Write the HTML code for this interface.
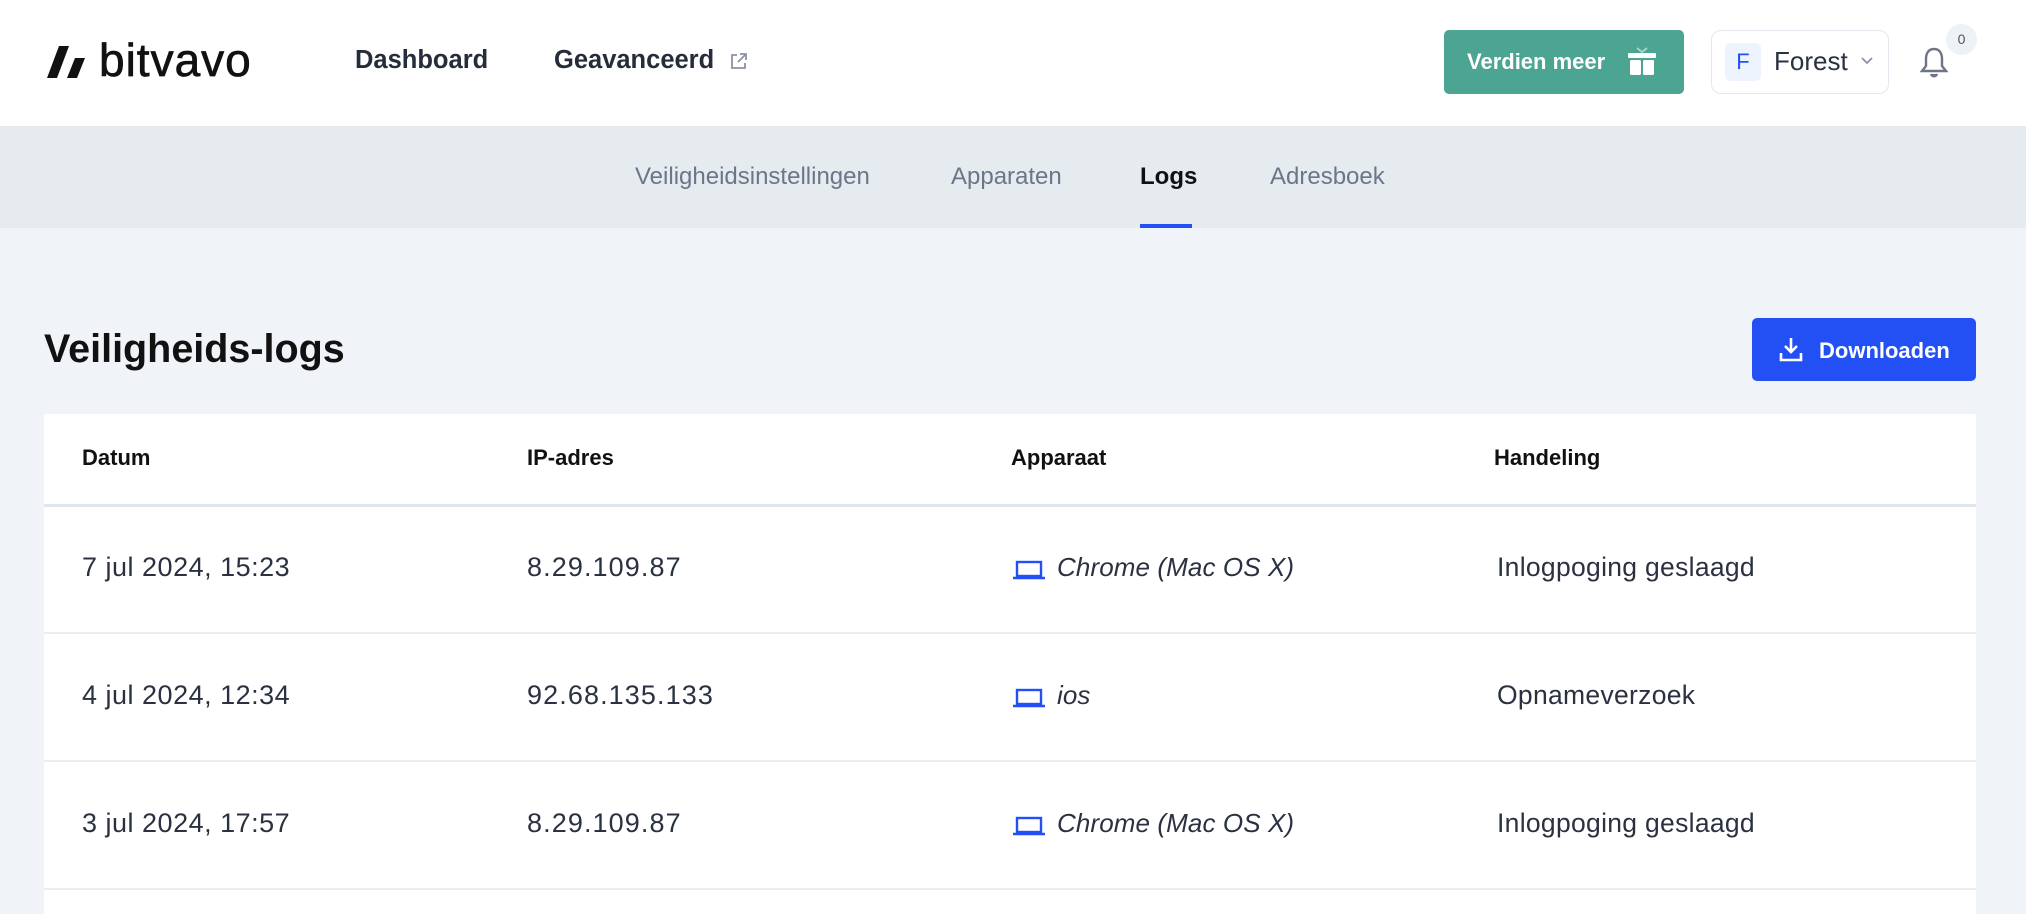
<!DOCTYPE html>
<html><head><meta charset="utf-8"><style>
*{margin:0;padding:0;box-sizing:border-box}
body{width:2026px;height:892px;overflow:hidden;background:#f0f3f8;font-family:"Liberation Sans",sans-serif;color:#1a1f2b;position:relative}
.abs{position:absolute}
header{position:absolute;left:0;top:0;width:2026px;height:126px;background:#fff}
.sub{position:absolute;left:0;top:126px;width:2026px;height:102px;background:#e6ebf0}
.nav{font-size:25.5px;font-weight:bold;color:#262d3a;top:46px}
.sn{font-size:24px;color:#6b7689;top:163px}
.card{position:absolute;left:44px;top:414px;width:1932px;height:500px;background:#fff}
.th{font-size:22px;font-weight:bold;color:#111;top:445px}
.td{font-size:27px;color:#2a3140}
.d{letter-spacing:0.5px}
.ip{letter-spacing:1.1px}
.ap{font-style:italic;letter-spacing:0.1px;font-size:26px}
.h{letter-spacing:0.3px;font-size:26.5px}
.row{position:absolute;left:44px;width:1932px;height:2px;background:#e9edf2}
</style></head><body>
<header>
<svg class="abs" style="left:47px;top:46px" width="42" height="32" viewBox="0 0 42 32"><polygon points="12,0 22,0 10,32 0,32" fill="#111"/><polygon points="28,12 38,12 30,32 20,32" fill="#111"/></svg>
<div class="abs" style="left:99px;top:33px;font-size:46px;color:#111;letter-spacing:1px;-webkit-text-stroke:0.7px #111">bitvavo</div>
<div class="abs nav" style="left:355px">Dashboard</div>
<div class="abs nav" style="left:554px">Geavanceerd</div>
<svg class="abs" style="left:730px;top:53px" width="17" height="17" viewBox="0 0 17 17" fill="none" stroke="#8a93a3" stroke-width="1.8"><path d="M7 2H2v13h13v-5"/><path d="M10 1h6v6M16 1L8 9"/></svg>
<div class="abs" style="left:1444px;top:30px;width:240px;height:64px;background:#4ca592;border-radius:5px"></div>
<div class="abs" style="left:1467px;top:49px;font-size:22px;font-weight:bold;color:#fff">Verdien meer</div>
<svg class="abs" style="left:1627px;top:46px" width="30" height="30" viewBox="0 0 30 30"><path d="M10 2l5 4 5-4" stroke="#a6d2c8" stroke-width="2" fill="none"/><rect x="1" y="7" width="28" height="5" rx="1" fill="#fff"/><rect x="3" y="14" width="11" height="15" rx="1.5" fill="#fff"/><rect x="16" y="14" width="11" height="15" rx="1.5" fill="#fff"/></svg>
<div class="abs" style="left:1711px;top:30px;width:178px;height:64px;border:1.5px solid #e3e7ee;border-radius:10px"></div>
<div class="abs" style="left:1725px;top:43px;width:36px;height:38px;background:#eef4fd;border-radius:5px;color:#2350f5;font-size:22px;text-align:center;line-height:38px">F</div>
<div class="abs" style="left:1774px;top:46px;font-size:26px;color:#2a3140">Forest</div>
<svg class="abs" style="left:1861px;top:57px" width="12" height="8" viewBox="0 0 12 8"><path d="M1 1l5 5 5-5" stroke="#8a93a3" stroke-width="1.8" fill="none"/></svg>
<svg class="abs" style="left:1919px;top:46px" width="30" height="34" viewBox="0 0 30 34" fill="none" stroke="#6b7585" stroke-width="2.4"><path d="M15 3c-6 0-8 5-8 10v7l-4 5h24l-4-5v-7c0-5-2-10-8-10z"/><path d="M12 28c1 3 5 3 6 0" fill="#6b7585"/></svg>
<div class="abs" style="left:1946px;top:24px;width:31px;height:31px;border-radius:50%;background:#eef2f7;font-size:14px;color:#555;text-align:center;line-height:31px">0</div>
</header>
<div class="sub"></div>
<div class="abs sn" style="left:635px">Veiligheidsinstellingen</div>
<div class="abs sn" style="left:951px">Apparaten</div>
<div class="abs sn" style="left:1140px;color:#111;font-weight:bold">Logs</div>
<div class="abs" style="left:1140px;top:224px;width:52px;height:4px;background:#2350f5"></div>
<div class="abs sn" style="left:1270px">Adresboek</div>
<div class="abs" style="left:44px;top:327px;font-size:39.5px;font-weight:bold;color:#111">Veiligheids-logs</div>
<div class="abs" style="left:1752px;top:318px;width:224px;height:63px;background:#2350f5;border-radius:5px"></div>
<svg class="abs" style="left:1779px;top:336px" width="24" height="26" viewBox="0 0 24 26" fill="none" stroke="#fff" stroke-width="2.6"><path d="M12 2v14M6 10l6 6 6-6"/><path d="M2 17v7h20v-7"/></svg>
<div class="abs" style="left:1819px;top:338px;font-size:22px;font-weight:bold;color:#fff">Downloaden</div>
<div class="card"></div>
<div class="abs th" style="left:82px">Datum</div>
<div class="abs th" style="left:527px">IP-adres</div>
<div class="abs th" style="left:1011px">Apparaat</div>
<div class="abs th" style="left:1494px">Handeling</div>
<div class="abs" style="left:44px;top:504px;width:1932px;height:3px;background:#dfe5ec"></div>
<div class="row" style="top:632px"></div>
<div class="row" style="top:760px"></div>
<div class="row" style="top:888px"></div>

<div class="abs td d" style="left:82px;top:552px">7 jul 2024, 15:23</div>
<div class="abs td ip" style="left:527px;top:552px">8.29.109.87</div>
<div class="abs td ap" style="left:1057px;top:552px">Chrome (Mac OS X)</div>
<div class="abs td h" style="left:1497px;top:552px">Inlogpoging geslaagd</div>

<div class="abs td d" style="left:82px;top:680px">4 jul 2024, 12:34</div>
<div class="abs td ip" style="left:527px;top:680px">92.68.135.133</div>
<div class="abs td ap" style="left:1057px;top:680px">ios</div>
<div class="abs td h" style="left:1497px;top:680px">Opnameverzoek</div>

<div class="abs td d" style="left:82px;top:808px">3 jul 2024, 17:57</div>
<div class="abs td ip" style="left:527px;top:808px">8.29.109.87</div>
<div class="abs td ap" style="left:1057px;top:808px">Chrome (Mac OS X)</div>
<div class="abs td h" style="left:1497px;top:808px">Inlogpoging geslaagd</div>

<svg class="abs" style="left:1012px;top:560px" width="34" height="20" viewBox="0 0 34 20" fill="none" stroke="#2350f5" stroke-width="2.4"><rect x="5" y="2" width="24" height="14"/><path d="M1 18h32"/></svg>
<svg class="abs" style="left:1012px;top:688px" width="34" height="20" viewBox="0 0 34 20" fill="none" stroke="#2350f5" stroke-width="2.4"><rect x="5" y="2" width="24" height="14"/><path d="M1 18h32"/></svg>
<svg class="abs" style="left:1012px;top:816px" width="34" height="20" viewBox="0 0 34 20" fill="none" stroke="#2350f5" stroke-width="2.4"><rect x="5" y="2" width="24" height="14"/><path d="M1 18h32"/></svg>
</body></html>
